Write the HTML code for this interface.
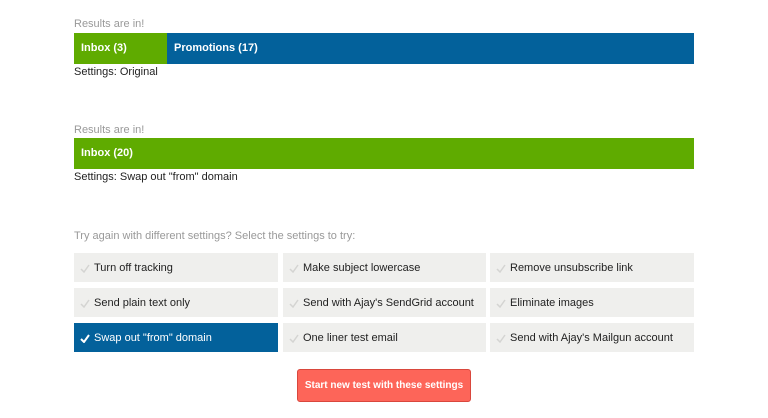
<!DOCTYPE html>
<html><head><style>
*{margin:0;padding:0;box-sizing:border-box}
body{width:768px;height:418px;background:#fff;font-family:"Liberation Sans",sans-serif;position:relative;overflow:hidden}
.a{position:absolute}
.muted{color:#999;font-size:11px}
.set{color:#222;font-size:11px}
.bar{height:31px;color:#fff;font-weight:bold;font-size:11px;line-height:31px;padding-left:7px}
.g{background:#5fab00}.b{background:#03619b}
.cell{position:absolute;background:#efefed;height:29px;font-size:11px;color:#222;line-height:31px;padding-left:20px}
.cell svg{position:absolute;left:6px;top:11px}
.cell.sel{background:#03619b;color:#fff}
</style></head><body>
<div class="a muted" style="left:74px;top:18px">Results are in!</div>
<div class="a bar g" style="left:74px;top:33px;width:93px">Inbox (3)</div>
<div class="a bar b" style="left:167px;top:33px;width:527px">Promotions (17)</div>
<div class="a set" style="left:74px;top:66px">Settings: Original</div>
<div class="a muted" style="left:74px;top:124px">Results are in!</div>
<div class="a bar g" style="left:74px;top:138px;width:620px">Inbox (20)</div>
<div class="a set" style="left:74px;top:171px">Settings: Swap out "from" domain</div>
<div class="a muted" style="left:74px;top:230px">Try again with different settings? Select the settings to try:</div>

<div class="cell" style="left:74px;top:253px;width:204px"><svg width="10" height="9" viewBox="0 0 10 9"><path d="M1 5l3 3 5-7" stroke="#d4d4d2" stroke-width="1.5" fill="none"/></svg>Turn off tracking</div>
<div class="cell" style="left:283px;top:253px;width:203px"><svg width="10" height="9" viewBox="0 0 10 9"><path d="M1 5l3 3 5-7" stroke="#d4d4d2" stroke-width="1.5" fill="none"/></svg>Make subject lowercase</div>
<div class="cell" style="left:490px;top:253px;width:204px"><svg width="10" height="9" viewBox="0 0 10 9"><path d="M1 5l3 3 5-7" stroke="#d4d4d2" stroke-width="1.5" fill="none"/></svg>Remove unsubscribe link</div>
<div class="cell" style="left:74px;top:288px;width:204px"><svg width="10" height="9" viewBox="0 0 10 9"><path d="M1 5l3 3 5-7" stroke="#d4d4d2" stroke-width="1.5" fill="none"/></svg>Send plain text only</div>
<div class="cell" style="left:283px;top:288px;width:203px"><svg width="10" height="9" viewBox="0 0 10 9"><path d="M1 5l3 3 5-7" stroke="#d4d4d2" stroke-width="1.5" fill="none"/></svg>Send with Ajay's SendGrid account</div>
<div class="cell" style="left:490px;top:288px;width:204px"><svg width="10" height="9" viewBox="0 0 10 9"><path d="M1 5l3 3 5-7" stroke="#d4d4d2" stroke-width="1.5" fill="none"/></svg>Eliminate images</div>
<div class="cell sel" style="left:74px;top:323px;width:204px"><svg width="10" height="9" viewBox="0 0 10 9"><path d="M1 5l3 3 5-7" stroke="#fff" stroke-width="2" fill="none"/></svg>Swap out "from" domain</div>
<div class="cell" style="left:283px;top:323px;width:203px"><svg width="10" height="9" viewBox="0 0 10 9"><path d="M1 5l3 3 5-7" stroke="#d4d4d2" stroke-width="1.5" fill="none"/></svg>One liner test email</div>
<div class="cell" style="left:490px;top:323px;width:204px"><svg width="10" height="9" viewBox="0 0 10 9"><path d="M1 5l3 3 5-7" stroke="#d4d4d2" stroke-width="1.5" fill="none"/></svg>Send with Ajay's Mailgun account</div>

<div class="a" style="left:297px;top:369px;width:174px;height:33px;background:#fd6559;border:1px solid #d9473d;border-radius:3px;color:#fff;font-weight:bold;font-size:10px;line-height:32px;text-align:center">Start new test with these settings</div>
</body></html>
